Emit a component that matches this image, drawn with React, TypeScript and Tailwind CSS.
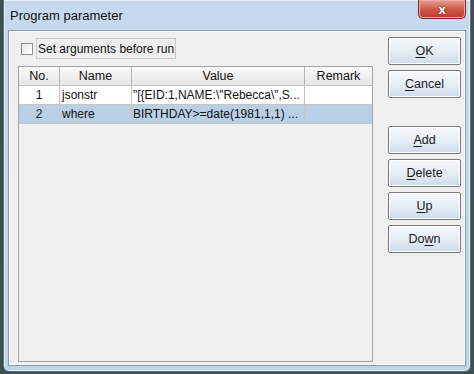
import React from 'react';

const font = { fontFamily: '"Liberation Sans", Arial, sans-serif' };

const rows = [
  { no: '1', name: 'jsonstr', value: '"[{EID:1,NAME:\\"Rebecca\\",S...', remark: '', selected: false },
  { no: '2', name: 'where', value: 'BIRTHDAY>=date(1981,1,1) ...', remark: '', selected: true },
];

function DlgButton({ label, mnemonic, className = '' }: { label: string; mnemonic: number; className?: string }) {
  return (
    <button
      className={`w-[73px] h-[28px] flex items-center justify-center border border-[#7a7a7a] rounded-[2px] bg-gradient-to-b from-[#f7f9fc] via-[#e6edf5] to-[#cfdcea] text-[12.5px] text-[#1a1a1a] shadow-[inset_0_0_0_1px_#ffffff] ${className}`}
    >
      {label.split('').map((ch, i) => (
        <span key={i} className={i === mnemonic ? 'underline underline-offset-2' : ''}>
          {ch}
        </span>
      ))}
    </button>
  );
}

export default function App() {
  return (
    <div className="w-[474px] h-[374px] bg-[#3e514f] overflow-hidden px-[3px] pb-[2px]" style={font}>
      {/* Window frame */}
      <div className="relative h-full flex flex-col rounded-b-[6px] border border-t-0 border-[#566e86] bg-gradient-to-b from-[#c6d9ee] to-[#bcd3ec] shadow-[inset_0_0_0_1px_#e3eefa]">
        {/* Title bar */}
        <div className="h-[30px] shrink-0 flex items-center pl-[6px] pt-[2px] text-[13px] text-[#111]">
          Program parameter
        </div>
        <div className="absolute top-0 right-[4px] w-[48px] h-[19px] rounded-b-[5px] border border-t-0 border-[#7a2a22] bg-gradient-to-b from-[#e6a193] via-[#cf5a4b] to-[#c1382c] flex items-center justify-center shadow-[inset_0_0_0_1px_#eeaaa0]">
          <span className="text-white text-[13px] font-bold leading-none [text-shadow:0_0_2px_#5a1a14]">x</span>
        </div>

        {/* Content panel */}
        <div className="flex-1 mx-[4px] mb-[5px] border border-[#8b9db1] bg-[#efefef] shadow-[inset_0_0_0_1px_#fbfbfb] flex pl-[9px] pt-[6px]">
          {/* Left column */}
          <div className="w-[355px] flex flex-col">
            <div className="mt-[1px] h-[21px] flex items-center">
              <div className="ml-[3px] w-[12px] h-[12px] border border-[#8e8f8f] bg-gradient-to-br from-[#e8e8e8] to-[#ffffff]" />
              <div className="ml-[3px] h-[21px] px-[1px] flex items-center border border-[#c8c8c8] text-[12px] text-[#111]">
                Set arguments before run
              </div>
            </div>

            {/* Table */}
            <div className="mt-[7px] h-[296px] border border-[#a3a3a3] bg-[#efefef] text-[12px] text-[#111]">
              <div className="flex h-[19px] bg-gradient-to-b from-[#fafafa] to-[#e6e6e6] border-b border-[#c4c4c4] text-[12.5px]">
                <div className="w-[41px] flex items-center justify-center border-r border-[#b5b5b5]">No.</div>
                <div className="w-[72px] flex items-center justify-center border-r border-[#b5b5b5]">Name</div>
                <div className="w-[173px] flex items-center justify-center border-r border-[#b5b5b5]">Value</div>
                <div className="flex-1 flex items-center justify-center">Remark</div>
              </div>
              {rows.map((r) => (
                <div
                  key={r.no}
                  className={`flex h-[19px] border-b border-[#c6c6c6] ${r.selected ? 'bg-[#b9cfe6]' : 'bg-white'}`}
                >
                  <div className="w-[41px] flex items-center justify-center border-r border-[#c6c6c6]">{r.no}</div>
                  <div className="w-[72px] flex items-center pl-[2px] border-r border-[#c6c6c6]">{r.name}</div>
                  <div className="w-[173px] flex items-center pl-[1px] border-r border-[#c6c6c6] whitespace-nowrap overflow-hidden">
                    {r.value}
                  </div>
                  <div className="flex-1 flex items-center pl-[2px]">{r.remark}</div>
                </div>
              ))}
            </div>
          </div>

          {/* Right column */}
          <div className="ml-[15px] flex flex-col">
            <DlgButton label="OK" mnemonic={0} />
            <DlgButton label="Cancel" mnemonic={0} className="mt-[5px]" />
            <DlgButton label="Add" mnemonic={0} className="mt-[28px]" />
            <DlgButton label="Delete" mnemonic={0} className="mt-[5px]" />
            <DlgButton label="Up" mnemonic={0} className="mt-[5px]" />
            <DlgButton label="Down" mnemonic={2} className="mt-[5px]" />
          </div>
        </div>
      </div>
    </div>
  );
}
